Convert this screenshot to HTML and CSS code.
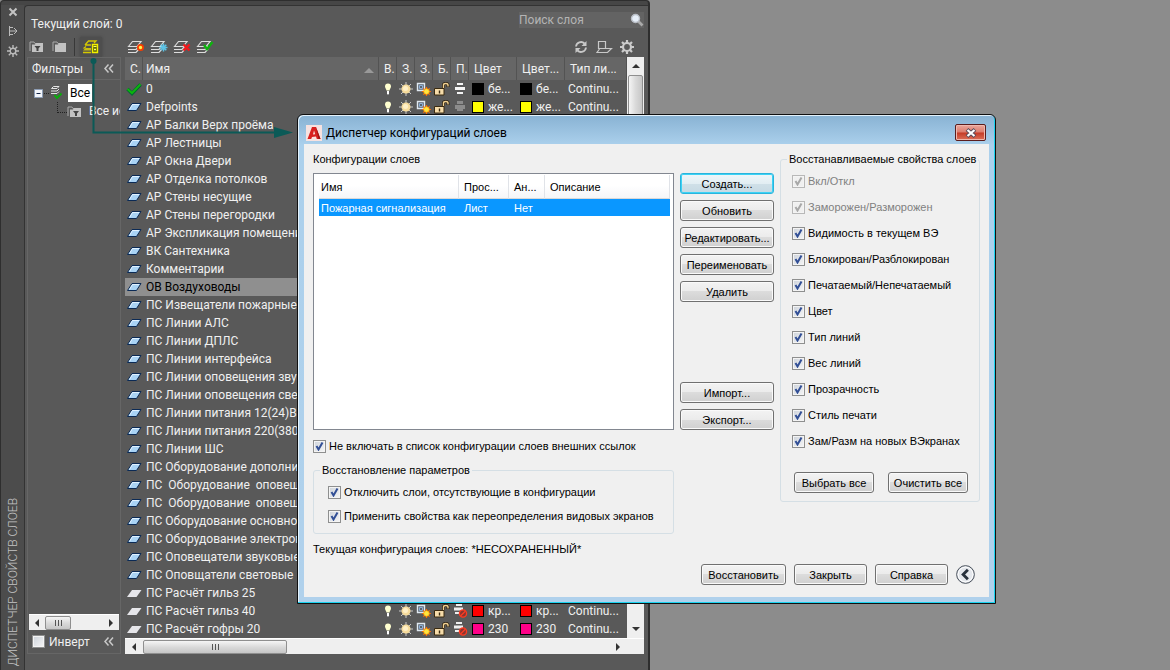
FILE: index.html
```html
<!DOCTYPE html>
<html lang="ru">
<head>
    <meta charset="UTF-8">
    <meta name="viewport" content="width=device-width, initial-scale=1.0">
    <title>Диспетчер свойств слоев</title>
    <link rel="stylesheet" href="styles.css">
</head>
<body>
    <!-- icons -->
    <svg class="sprite" aria-hidden="true">
        <symbol id="i-layer" viewBox="0 0 16 10"><path d="M1.500 8.500 6 1.500h9L10.500 8.500z" fill="#a9d3f5" stroke="#0b2a55"/><path d="M3.500 7.500 6.500 2.500h6.500" fill="none" stroke="#e2f2ff"/></symbol>
        <symbol id="i-unused" viewBox="0 0 16 10"><path d="M1 9 6 2h9.500L10.500 9z" fill="#e6e6ea"/></symbol>
        <symbol id="i-check" viewBox="0 0 16 14"><path d="M1.500 7 6 11.500 14.500 2.500" fill="none" stroke="#063" stroke-width="3.400"/><path d="M1.500 7 6 11 14.500 2.200" fill="none" stroke="#0db50d" stroke-width="2"/></symbol>
        <symbol id="i-bulb" viewBox="0 0 16 16"><path d="M8 2.500a3 3 0 0 1 3 3c0 1.700-1.300 2.300-1.500 4h-3C6.300 7.800 5 7.200 5 5.500a3 3 0 0 1 3-3z" fill="#ffffd0"/><path d="M7 10h2v2.500L8 14l-1-1.500z" fill="#fff"/></symbol>
        <symbol id="i-sun" viewBox="0 0 16 16"><path d="M8 1v14M1 8h14M3 3l10 10M13 3 3 13" stroke="#c8c8c8"/><circle cx="8" cy="8" r="4.500" fill="#f7dc9c"/><circle cx="7.500" cy="7.500" r="2.500" fill="#fff0c8"/></symbol>
        <symbol id="i-vp" viewBox="0 0 16 16"><path d="M1.500 2.500h7v7h-7z" fill="#5b6470" stroke="#dfe8f0" stroke-width="1.400"/><path d="M3.500 4.500h3v3h-3z" fill="none" stroke="#8fb0d8"/><path d="M10.500 6v9M6 10.500h9M7.300 7.300l6.400 6.400M13.700 7.300l-6.400 6.400" stroke="#f60" stroke-width="1.200"/><circle cx="10.500" cy="10.500" r="2.800" fill="#ffe640" stroke="#f90" stroke-width=".8"/></symbol>
        <symbol id="i-lock" viewBox="0 0 16 16"><path d="M9.500 7V4c0-2 4.500-2 4.500 0v2" fill="none" stroke="#2a2010" stroke-width="3"/><path d="M9.500 7V4c0-2 4.500-2 4.500 0v1.500" fill="none" stroke="#f0cf90" stroke-width="1.400"/><path d="M.5 7.500h9.500v6.500H.5z" fill="#f6dcaa" stroke="#3a2a10"/><path d="M5.500 9.500v3" stroke="#3a2a10" stroke-width="1.400"/></symbol>
        <symbol id="i-print" viewBox="0 0 16 16"><path d="M5 2h6v2H5zM3 6h10v3H3zM5 11h6v2H5z" fill="#f4f4f4"/></symbol>
        <symbol id="i-print-off" viewBox="0 0 16 16"><path d="M5 2h6v3H5zM3 6h10v4H3zM5 10h6v2H5z" fill="#8c8c8c"/></symbol>
        <symbol id="i-noprint" viewBox="0 0 16 16"><path d="M4 1h6v2H4zM2 4.500h9v3H2zM3 9h4v2H3z" fill="#eee"/><circle cx="11" cy="10.500" r="3.600" fill="#8a3530" stroke="#ff3b22" stroke-width="1.300"/><path d="m8.500 13 5-5" stroke="#ff3b22" stroke-width="1.300"/></symbol>
        <symbol id="i-stack" viewBox="0 0 16 16"><path d="M1 13.500h8l3-3.500M1 10.500h8l3-3.500M1.500 7.500l4-5H14l-4 5z" fill="none" stroke="#ddd" stroke-width="1.200"/></symbol>
        <symbol id="i-folder" viewBox="0 0 16 14"><path d="M1 11V2h4l1 1.500h6" fill="none" stroke="#aaa"/><path d="M3 4.500h3L7 3h7v9H3z" fill="#c2c2c2"/></symbol>
    </svg>

    <main class="desktop">
        <section class="palette">
            <aside class="strip">
                <button class="strip-btn" aria-label="Закрыть палитру"><svg width="10" height="10" viewBox="0 0 10 10"><path d="m1.500 1.500 7 7m0-7-7 7" stroke="#c4c4c4" stroke-width="2"/></svg></button>
                <button class="strip-btn" aria-label="Автоскрытие"><svg width="10" height="10" viewBox="0 0 10 10"><path d="M1.500 0v10M2 5h7M6 2l3 3-3 3M2 1.500h3M2 8.500h3" fill="none" stroke="#bbb"/></svg></button>
                <button class="strip-btn" aria-label="Свойства палитры"><svg width="12" height="12" viewBox="0 0 12 12"><circle cx="6" cy="6" r="2.800" fill="none" stroke="#bbb" stroke-width="1.400"/><path d="M6 0v3M6 9v3M0 6h3M9 6h3M1.800 1.800l2 2M8.200 8.200l2 2M10.200 1.800l-2 2M3.800 8.200l-2 2" stroke="#bbb" stroke-width="1.400"/></svg></button>
                <span class="strip-title">ДИСПЕТЧЕР СВОЙСТВ СЛОЕВ</span>
            </aside>

            <div class="palette-body">
                <header class="palette-top">
                    <p class="current-layer">Текущий слой: 0</p>
                    <label class="search">
                        <input type="text" placeholder="Поиск слоя" aria-label="Поиск слоя">
                        <svg width="14" height="14" viewBox="0 0 14 14"><path d="m8.500 8.500 4 4" stroke="#aaa" stroke-width="2.600"/><circle cx="5.500" cy="5.500" r="4" fill="#e6eef8" stroke="#b9bec6" stroke-width="1.400"/></svg>
                    </label>
                </header>

                <div class="toolbar">
                    <button class="tool" aria-label="Новый фильтр свойств"><svg width="16" height="14"><use href="#i-folder"/><path d="M5.500 6h6L9.500 8.500V11h-2V8.500z" fill="#444"/></svg></button>
                    <button class="tool" aria-label="Новый групповой фильтр"><svg width="16" height="14"><use href="#i-folder"/></svg></button>
                    <span class="tool-sep"></span>
                    <button class="tool active" aria-label="Диспетчер конфигураций слоев"><svg width="18" height="16" viewBox="0 0 18 16"><path d="m3 6 3.500-4H14l-2 2M3 6h6M1.500 9.500 4 7.500M1 13.500h8" fill="none" stroke="#d5c800" stroke-width="1.300"/><path d="m1 11.500 2.500-2.500H9v2.500z" fill="#c9bd10"/><path d="M10.500 5.500h5v8h-5z" fill="#5f6a00" stroke="#f2f000" stroke-width="1.400"/><path d="M11.500 7.500h3M12 10.500h2M13 9.500v2" stroke="#ff6"/></svg></button>
                    <span class="tool-gap"></span>
                    <button class="tool" aria-label="Создать слой"><svg width="18" height="16"><use href="#i-stack" width="16" height="16"/><circle cx="13.500" cy="8.500" r="2.600" fill="#fff04a" stroke="#f63c00" stroke-width="1.800"/></svg></button>
                    <button class="tool" aria-label="Создать замороженный слой"><svg width="18" height="16"><use href="#i-stack" width="16" height="16"/><path d="M13.500 4.500v8M9.500 8.500h8M10.700 5.700l5.600 5.600M16.300 5.700l-5.600 5.600" stroke="#5cc3e6" stroke-width="1.500"/></svg></button>
                    <button class="tool" aria-label="Удалить слой"><svg width="18" height="16"><use href="#i-stack" width="16" height="16"/><path d="m10.500 5.500 6 6m0-6-6 6" stroke="#f5171b" stroke-width="2.400"/></svg></button>
                    <button class="tool" aria-label="Установить"><svg width="18" height="16"><use href="#i-stack" width="16" height="16"/><path d="m8 6 3 4L16.500 3" fill="none" stroke="#0db50d" stroke-width="2.400"/></svg></button>
                    <span class="tool-fill"></span>
                    <button class="tool" aria-label="Обновить"><svg width="14" height="14" viewBox="0 0 14 14"><path d="M2 6.500a5 5 0 0 1 8.500-3M12 7.500a5 5 0 0 1-8.500 3" fill="none" stroke="#c8c8c8" stroke-width="1.800"/><path d="M12.500 1v5h-5zM1.500 13V8h5z" fill="#c8c8c8"/></svg></button>
                    <button class="tool" aria-label="Переопределения"><svg width="17" height="14" viewBox="0 0 17 14"><path d="M2.500 1.500h7v7h-7zM9.500 8.500h6l-4 4H1l2.500-3.500" fill="none" stroke="#c8c8c8" stroke-width="1.200"/></svg></button>
                    <button class="tool" aria-label="Параметры"><svg width="16" height="16" viewBox="0 0 16 16"><circle cx="8" cy="8" r="4" fill="none" stroke="#ccc" stroke-width="2.200"/><path d="M8 1v3M8 12v3M1 8h3M12 8h3M3 3l2 2M11 11l2 2M13 3l-2 2M5 11l-2 2" stroke="#ccc" stroke-width="2.200"/></svg></button>
                </div>

                <div class="panes">
                    <div class="filters">
                        <div class="filters-head"><span>Фильтры</span><button class="chev" aria-label="Свернуть"><svg width="10" height="9" viewBox="0 0 10 9"><path d="M4.500.5l-3.500 4 3.500 4M9 .5l-3.500 4 3.500 4" fill="none" stroke="#c8c8c8" stroke-width="1.500"/></svg></button></div>
                        <div class="tree">
                            <div class="node">
                                <svg width="29" height="16" viewBox="0 0 29 16"><path d="M.5 4.500h8v8h-8z" fill="#f2f5fa" stroke="#8d9db5"/><path d="M2.500 8.500h4" stroke="#124"/><path d="M10 8.500h5" stroke="#222" stroke-dasharray="1 1"/><path d="m17.500 3.500 2-2H25l-2 2zM17 6h6l2-2M17 8.500h6l2-2" fill="none" stroke="#e4e4e4"/><path d="m20.500 10 2.500 3 4.500-4.500" fill="none" stroke="#0bab0b" stroke-width="2"/></svg>
                                <span class="node-name selected">Все</span>
                            </div>
                            <div class="node child">
                                <svg width="27" height="18" viewBox="0 0 27 18"><path d="M1.500 0v11M2 10.500h10" stroke="#222" stroke-dasharray="1 1" fill="none"/><use href="#i-folder" x="11" y="3" width="16" height="14"/><path d="M17 9h6l-2 2.500V14h-2v-2.500z" fill="#444"/></svg>
                                <span class="node-name">Все используемые слои</span>
                            </div>
                        </div>
                        <div class="hbar small"><button class="arrow left" aria-label="Влево"></button><span class="thumb"></span><button class="arrow right" aria-label="Вправо"></button></div>
                        <div class="filters-foot"><label><input type="checkbox">Инверт</label><button class="chev" aria-label="Свернуть фильтры"><svg width="10" height="9" viewBox="0 0 10 9"><path d="M4.500.5l-3.500 4 3.500 4M9 .5l-3.500 4 3.500 4" fill="none" stroke="#c8c8c8" stroke-width="1.500"/></svg></button></div>
                    </div>

                    <div class="layers">
                        <div class="layers-view">
                            <table class="layer-table">
                                <colgroup><col class="c-state"><col><col class="c-ico"><col class="c-ico"><col class="c-ico"><col class="c-ico"><col class="c-ico"><col class="c-color"><col class="c-color"><col class="c-type"></colgroup>
                                <thead>
                                    <tr><th>С.</th><th class="name sorted">Имя</th><th>В.</th><th>З.</th><th>З.</th><th>Б.</th><th>П.</th><th>Цвет</th><th>Цвет...</th><th>Тип ли...</th></tr>
                                </thead>
                                <tbody id="layer-rows"></tbody>
                            </table>
                            <div class="vbar"><button class="arrow up" aria-label="Вверх"></button><span class="vthumb"></span><button class="arrow down" aria-label="Вниз"></button></div>
                        </div>
                        <div class="hbar"><button class="arrow left" aria-label="Влево"></button><span class="thumb"></span><button class="arrow right" aria-label="Вправо"></button></div>
                    </div>
                </div>
            </div>
        </section>

        <svg class="pointer" width="204" height="86" viewBox="0 0 204 86" aria-hidden="true"><path d="M4.500 4v70.500H190" fill="none" stroke="#0b5a57" stroke-width="2"/><circle cx="4.500" cy="3" r="3" fill="#0b5a57"/><path d="M185 69v11l19-5.500z" fill="#0b5a57"/></svg>

        <section class="dialog" role="dialog" aria-labelledby="dlg-title">
            <header class="titlebar">
                <svg width="16" height="16" viewBox="0 0 16 16"><path d="M0 0h16v16H0z" fill="#f7e2e0"/><path d="M1.500 14 6 2h4l4.500 12h-3.700l-.8-2.500-4 .5-.8 2z" fill="#d8201f"/><path d="m7 9.500 1-4 1.200 3.700z" fill="#f7e2e0"/><path d="m10 2 4.500 12h-2z" fill="#9c1414"/></svg>
                <h1 id="dlg-title">Диспетчер конфигураций слоев</h1>
                <button class="close" aria-label="Закрыть окно"><svg width="12" height="10" viewBox="0 0 12 10"><path d="m2 1.500 8 7m0-7-8 7" stroke="#5a4a58" stroke-width="4"/><path d="m2.500 2 7 6m0-6-7 6" stroke="#fff" stroke-width="2.200"/></svg></button>
            </header>
            <div class="client">
                <div class="grid">
                    <div class="states">
                        <p class="caption">Конфигурации слоев</p>
                        <div class="listbox">
                            <table class="state-table">
                                <colgroup><col class="s-name"><col class="s-space"><col class="s-same"><col></colgroup>
                                <thead><tr><th>Имя</th><th>Прос...</th><th>Ан...</th><th>Описание</th></tr></thead>
                                <tbody><tr><td>Пожарная сигнализация</td><td>Лист</td><td>Нет</td><td></td></tr></tbody>
                            </table>
                        </div>
                    </div>
                    <div class="actions">
                        <button class="btn default">Создать...</button>
                        <button class="btn">Обновить</button>
                        <button class="btn">Редактировать...</button>
                        <button class="btn">Переименовать</button>
                        <button class="btn">Удалить</button>
                        <button class="btn push">Импорт...</button>
                        <button class="btn">Экспорт...</button>
                    </div>
                    <div class="options">
                        <label class="check"><input type="checkbox" checked>Не включать в список конфигурации слоев внешних ссылок</label>
                        <fieldset class="restore">
                            <legend>Восстановление параметров</legend>
                            <label class="check"><input type="checkbox" checked>Отключить слои, отсутствующие в конфигурации</label>
                            <label class="check"><input type="checkbox" checked>Применить свойства как переопределения видовых экранов</label>
                        </fieldset>
                        <p class="caption">Текущая конфигурация слоев: *НЕСОХРАНЕННЫЙ*</p>
                    </div>
                    <fieldset class="props">
                        <legend>Восстанавливаемые свойства слоев</legend>
                        <label class="check off"><input type="checkbox" checked disabled>Вкл/Откл</label>
                        <label class="check off"><input type="checkbox" checked disabled>Заморожен/Разморожен</label>
                        <label class="check"><input type="checkbox" checked>Видимость в текущем ВЭ</label>
                        <label class="check"><input type="checkbox" checked>Блокирован/Разблокирован</label>
                        <label class="check"><input type="checkbox" checked>Печатаемый/Непечатаемый</label>
                        <label class="check"><input type="checkbox" checked>Цвет</label>
                        <label class="check"><input type="checkbox" checked>Тип линий</label>
                        <label class="check"><input type="checkbox" checked>Вес линий</label>
                        <label class="check"><input type="checkbox" checked>Прозрачность</label>
                        <label class="check"><input type="checkbox" checked>Стиль печати</label>
                        <label class="check"><input type="checkbox" checked>Зам/Разм на новых ВЭкранах</label>
                        <div class="pair"><button class="btn">Выбрать все</button><button class="btn">Очистить все</button></div>
                    </fieldset>
                </div>
                <footer class="dialog-foot">
                    <button class="btn wide">Восстановить</button>
                    <button class="btn">Закрыть</button>
                    <button class="btn">Справка</button>
                    <button class="round" aria-label="Скрыть параметры"><svg width="19" height="19" viewBox="0 0 20 20"><circle cx="10" cy="10" r="9.300" fill="#e4e7ec" stroke="#3c4450"/><circle cx="10" cy="10" r="7.800" fill="none" stroke="#fff"/><path d="M12.500 5 7.500 10l5 5" fill="none" stroke="#26303c" stroke-width="3"/></svg></button>
                </footer>
            </div>
        </section>
    </main>

    <script>
        // name, state icon, print icon, color, color name
        const layers = [
            ["0", "check", "print", "#000", "бе..."],
            ["Defpoints", "layer", "print-off", "#ff0", "же..."],
            ["АР Балки Верх проёма"],
            ["АР Лестницы"],
            ["АР Окна Двери"],
            ["АР Отделка потолков"],
            ["АР Стены несущие"],
            ["АР Стены перегородки"],
            ["АР Экспликация помещений"],
            ["ВК Сантехника"],
            ["Комментарии"],
            ["ОВ Воздуховоды"],
            ["ПС Извещатели пожарные"],
            ["ПС Линии АЛС"],
            ["ПС Линии ДПЛС"],
            ["ПС Линии интерфейса"],
            ["ПС Линии оповещения звукового"],
            ["ПС Линии оповещения светового"],
            ["ПС Линии питания 12(24)В"],
            ["ПС Линии питания 220(380)В"],
            ["ПС Линии ШС"],
            ["ПС Оборудование дополнительное"],
            ["ПС  Оборудование  оповещения"],
            ["ПС  Оборудование  оповещения"],
            ["ПС Оборудование основное"],
            ["ПС Оборудование электропитания"],
            ["ПС Оповещатели звуковые"],
            ["ПС Оповщатели световые"],
            ["ПС Расчёт гильз 25", "unused"],
            ["ПС Расчёт гильз 40", "unused", "noprint", "#f00", "кр..."],
            ["ПС Расчёт гофры 20", "unused", "noprint", "#f08", "230"],
        ];
        const icon = (id, w, h) => `<svg width="${w}" height="${h}"><use href="#i-${id}"/></svg>`;
        let ht = "";
        layers.forEach(([name, state = "layer", print = "print", color = "#000", label = "бе..."]) => {
            const sel = name === "ОВ Воздуховоды" ? " class='current'" : "";
            const swatch = `<td class="color"><i style="background:${color}"></i>${label}</td>`;
            ht += `<tr${sel}><td>${state === "check" ? icon(state, 16, 14) : icon(state, 16, 10)}</td><td class="name">${name}</td>`;
            ["bulb", "sun", "vp", "lock", print].forEach((id) => { ht += `<td>${icon(id, 16, 16)}</td>`; });
            ht += swatch + swatch + "<td class='type'>Continu...</td></tr>";
        });
        document.getElementById("layer-rows").innerHTML = ht;
    </script>
</body>
</html>
```
FILE: styles.css
```css
* {
    box-sizing: border-box;
}

body {
    margin: 0;
    background: #8c8c8c;
    font-family: Roboto, "Noto Sans", sans-serif;
    font-size: 12px;
    color: #f0f0f0;
}

p, h1, fieldset {
    margin: 0;
    padding: 0;
}

button {
    padding: 0;
    border: none;
    background: none;
    font: inherit;
    color: inherit;
}

svg {
    display: block;
    flex: none;
}

.sprite {
    position: absolute;
    width: 0;
    height: 0;
}

.desktop {
    position: relative;
    min-height: 100vh;
    min-width: 1000px;
    overflow: hidden;
}

/* palette */
.palette {
    display: flex;
    min-height: 100vh;
    margin-right: 520px;
    padding-top: 4px;
    border: 1px solid #2e2e2e;
    border-width: 1px 2px 0 1px;
    border-radius: 4px 4px 0 0;
    background: #464646;
}

.strip {
    flex: none;
    width: 23px;
    display: flex;
    flex-direction: column;
    align-items: center;
    gap: 9px;
    padding: 2px 0 4px;
    background: #4c4c4c;
}

.strip-title {
    margin-top: auto;
    writing-mode: vertical-rl;
    transform: rotate(180deg);
    line-height: 16px;
    font-weight: 300;
    color: #c4c4c4;
    white-space: nowrap;
}

.palette-body {
    flex: 1;
    min-width: 0;
    padding: 6px 4px 16px 2px;
    border: 1px solid #333;
    border-width: 1px 0 0 1px;
    border-radius: 4px 0 0 0;
    background: #595959;
}

.palette-top {
    display: flex;
    justify-content: space-between;
    height: 24px;
    padding-left: 4px;
}

.current-layer {
    padding-top: 4px;
    line-height: 16px;
}

.search {
    display: flex;
    align-items: center;
    width: 125px;
    height: 16px;
    background: #636363;
}

.search input {
    flex: 1;
    min-width: 0;
    padding: 0;
    border: none;
    background: none;
    font: inherit;
    color: #fff;
}

.search input::placeholder {
    color: #b4b4b4;
}

.toolbar {
    display: flex;
    align-items: center;
    gap: 5px;
    height: 21px;
    padding: 0 8px 0 1px;
}

.tool {
    min-width: 18px;
    display: flex;
    justify-content: center;
}

.tool-sep {
    width: 1px;
    height: 18px;
    background: #383838;
}

.tool.active {
    padding: 2px;
    background: #4e4e4e;
    box-shadow: 0 0 3px #444;
}

.tool-gap {
    width: 15px;
}

.tool-fill {
    flex: 1;
}

.panes {
    display: flex;
    gap: 4px;
}

.filters {
    flex: none;
    width: 94px;
    display: flex;
    flex-direction: column;
    border-right: 1px solid #666;
    border-left: 1px solid #666;
}

.filters-head, .filters-foot {
    display: flex;
    justify-content: space-between;
    align-items: center;
    height: 23px;
    padding: 0 6px 0 4px;
    border: 1px solid #666;
    border-width: 1px 0;
}

.filters-foot {
    height: 24px;
    border-width: 0 0 1px;
}

.filters-foot label {
    display: flex;
    align-items: center;
    gap: 4px;
}

.tree {
    flex: 1;
    padding-top: 4px;
    overflow: hidden;
}

.node {
    display: flex;
    align-items: center;
    height: 18px;
    padding-left: 6px;
}

.node.child {
    gap: 4px;
    padding-left: 28px;
}

.node-name {
    padding: 0 2px;
    line-height: 18px;
    white-space: nowrap;
}

.node-name.selected {
    margin-left: 5px;
    background: #fff;
    color: #000;
}

/* scroll bars */
.hbar {
    display: flex;
    align-items: center;
    justify-content: space-between;
    height: 16px;
    background: #efefef;
    border-top: 1px solid #fff;
}

.hbar .thumb {
    width: 144px;
    height: 14px;
    margin-right: auto;
    border: 1px solid #8f8f8f;
    border-radius: 2px;
    background: linear-gradient(#f5f5f5, #dadada 50%, #c6c6c6);
    display: flex;
    justify-content: center;
    align-items: center;
}

.hbar .thumb::before {
    content: "";
    width: 7px;
    height: 6px;
    background: repeating-linear-gradient(90deg, #555 0 1px, transparent 1px 3px);
}

.hbar.small {
    margin: 0 1px;
}

.hbar.small .thumb {
    width: 26px;
}

.arrow {
    flex: none;
    width: 18px;
    height: 18px;
    display: flex;
    align-items: center;
    justify-content: center;
}

.arrow::before {
    content: "";
    border: 4px solid transparent;
}

.arrow.left::before {
    border-right-color: #333;
    border-left-width: 0;
}

.arrow.right::before {
    border-left-color: #333;
    border-right-width: 0;
}

.hbar > .arrow.right {
    margin-right: 17px;
}

.hbar.small > .arrow.right {
    width: 16px;
    margin-right: 0;
}

.hbar.small > .arrow.left {
    width: 16px;
}

.arrow.up::before {
    border-bottom-color: #333;
    border-top-width: 0;
}

.arrow.down::before {
    border-top-color: #333;
    border-bottom-width: 0;
}

.vbar {
    flex: none;
    width: 17px;
    display: flex;
    flex-direction: column;
    background: #efefef;
}

.vthumb {
    flex: 1;
    margin: 0 1px 150px;
    border: 1px solid #8f8f8f;
    border-radius: 2px;
    background: linear-gradient(90deg, #f5f5f5, #dadada 50%, #c6c6c6);
}

/* layer list */
.layers {
    flex: 1;
    min-width: 0;
}

.layers-view {
    display: flex;
}

.layer-table {
    flex: 1;
    min-width: 0;
    width: 100%;
    table-layout: fixed;
    border-collapse: separate;
    border-spacing: 0;
}

.c-state, .c-ico {
    width: 18px;
}

.c-color {
    width: 48px;
}

.c-type {
    width: 62px;
}

.layer-table th {
    height: 23px;
    padding: 0 0 0 5px;
    border-right: 1px solid #535353;
    background: #666;
    font-weight: 400;
    text-align: left;
    white-space: nowrap;
    overflow: hidden;
}

.layer-table th.sorted::after {
    content: "";
    float: right;
    margin: 6px 4px 0 0;
    border: 5px solid transparent;
    border-top-width: 0;
    border-bottom-color: #999;
}

.layer-table td {
    height: 18px;
    padding: 0 1px;
    line-height: 18px;
    white-space: nowrap;
    overflow: hidden;
}

.layer-table .name {
    padding-left: 3px;
    white-space: pre;
}

.layer-table .type {
    padding-left: 3px;
}

.layer-table .color i {
    display: inline-block;
    width: 12px;
    height: 12px;
    margin: 0 4px 0 2px;
    border: 1px solid #000;
    vertical-align: -2px;
}

.current td {
    background: #8f8f8f;
    color: #000;
}

/* callout from the toolbar button to the dialog */
.pointer {
    position: absolute;
    left: 89px;
    top: 58px;
}

/* dialog */
.dialog {
    position: absolute;
    left: 297px;
    right: 174px;
    top: 114px;
    padding: 0 6px 6px;
    border: 1px solid #111;
    border-radius: 6px 6px 0 0;
    background: linear-gradient(#88b2d3, #abd0ec 30px, #b0d1ec);
    box-shadow: inset -1px -1px 0 #19d3f0, inset 1px 1px 0 #e4f2fb;
    font-family: "Liberation Sans", Arial, sans-serif;
    font-size: 11px;
    color: #000;
}

.titlebar {
    display: flex;
    align-items: center;
    gap: 4px;
    height: 29px;
    padding: 6px 3px 0 2px;
}

.titlebar h1 {
    flex: 1;
    font-family: Roboto, "Noto Sans", sans-serif;
    font-size: 12px;
    font-weight: 400;
    line-height: 16px;
}

.close {
    width: 31px;
    height: 17px;
    display: flex;
    align-items: center;
    justify-content: center;
    border: 1px solid #5b1d1d;
    border-radius: 2px;
    background: linear-gradient(#eba79c, #dc7c6d 48%, #c43a26 52%, #dc6f58);
    box-shadow: inset 0 0 0 1px #f0b8ae;
}

.client {
    padding: 8px 9px 12px 9px;
    background: #f0f0f0;
}

.grid {
    display: grid;
    grid-template-columns: 1fr 94px 200px;
    column-gap: 6px;
}

.caption, legend {
    line-height: 14px;
}

.states .caption {
    margin-bottom: 7px;
}

.listbox {
    height: 257px;
    padding: 1px 3px 0 5px;
    border: 1px solid #828790;
    background: #fff;
}

.state-table {
    width: 100%;
    table-layout: fixed;
    border-collapse: separate;
    border-spacing: 0;
}

.s-name {
    width: 140px;
}

.s-space {
    width: 50px;
}

.s-same {
    width: 36px;
}

.state-table th {
    height: 24px;
    padding: 0 5px;
    border-right: 1px solid #e0e3e8;
    border-bottom: 1px solid #d8d8d8;
    background: linear-gradient(#fff 45%, #f5f6f8);
    font-weight: 400;
    text-align: left;
    white-space: nowrap;
}

.state-table td {
    height: 17px;
    padding: 0 5px;
    background: #0a97ff;
    color: #fff;
    white-space: nowrap;
}

.state-table th:first-child, .state-table td:first-child {
    padding-left: 2px;
}

.actions {
    display: flex;
    flex-direction: column;
    gap: 6px;
    padding-top: 21px;
}

.btn {
    height: 21px;
    border: 1px solid #707070;
    border-radius: 3px;
    background: linear-gradient(#f3f3f3, #ebebeb 50%, #dcdcdc 50%, #d0d0d0);
    box-shadow: inset 0 0 0 1px #fafafa;
    line-height: 16px;
    white-space: nowrap;
}

.btn.default {
    border-color: #2ab4dc;
    background: linear-gradient(#eff6f9, #e2eef3 50%, #d0e0e8 50%, #c6dae4);
    box-shadow: inset 0 0 0 1px #3cd2f5;
}

.btn.push {
    margin-top: auto;
}

.check {
    display: flex;
    align-items: center;
    gap: 3px;
    height: 16px;
    white-space: nowrap;
}

.check.off {
    color: #808080;
}

input[type="checkbox"] {
    appearance: none;
    flex: none;
    width: 13px;
    height: 13px;
    margin: 0;
    border: 1px solid #8e8f8f;
    background: linear-gradient(135deg, #cdd3db, #f6f6f6);
    box-shadow: inset 0 0 0 1px #f4f4f4;
}

input[type="checkbox"]:checked {
    background: url("data:image/svg+xml,%3Csvg xmlns='http://www.w3.org/2000/svg' viewBox='0 0 11 11'%3E%3Cpath d='M2.500 5 4.500 8.500 8.500 1.500' fill='none' stroke='%23324f96' stroke-width='2'/%3E%3C/svg%3E"), linear-gradient(135deg, #cdd3db, #f6f6f6);
}

input[type="checkbox"]:checked:disabled {
    border-color: #b8b8b8;
    background: url("data:image/svg+xml,%3Csvg xmlns='http://www.w3.org/2000/svg' viewBox='0 0 11 11'%3E%3Cpath d='M2.500 5 4.500 8.500 8.500 1.500' fill='none' stroke='%23a8a8a8' stroke-width='2'/%3E%3C/svg%3E");
}

.options {
    grid-column: 1;
    padding-top: 8px;
}

fieldset {
    min-width: 0;
    border: 1px solid #d5dfe5;
    border-radius: 3px;
}

legend {
    margin-left: 6px;
    padding: 0 2px;
    white-space: nowrap;
}

.restore {
    display: flex;
    flex-direction: column;
    gap: 8px;
    margin: 9px 0 8px;
    padding: 7px 0 9px 14px;
}

.restore legend {
    margin-left: -8px;
}

.props {
    grid-column: 3;
    grid-row: 1 / 3;
    align-self: start;
    display: flex;
    flex-direction: column;
    gap: 10px;
    padding: 7px 11px 8px 11px;
}

.props legend {
    margin-left: -5px;
}

.pair {
    display: flex;
    justify-content: space-between;
    gap: 14px;
    margin-top: 13px;
    padding-left: 2px;
}

.pair .btn {
    flex: 1;
}

.dialog-foot {
    display: flex;
    justify-content: flex-end;
    align-items: center;
    gap: 8px;
    margin-top: 8px;
    padding-right: 5px;
}

.dialog-foot .btn {
    width: 73px;
}

.dialog-foot .btn.wide {
    width: 85px;
}
```
